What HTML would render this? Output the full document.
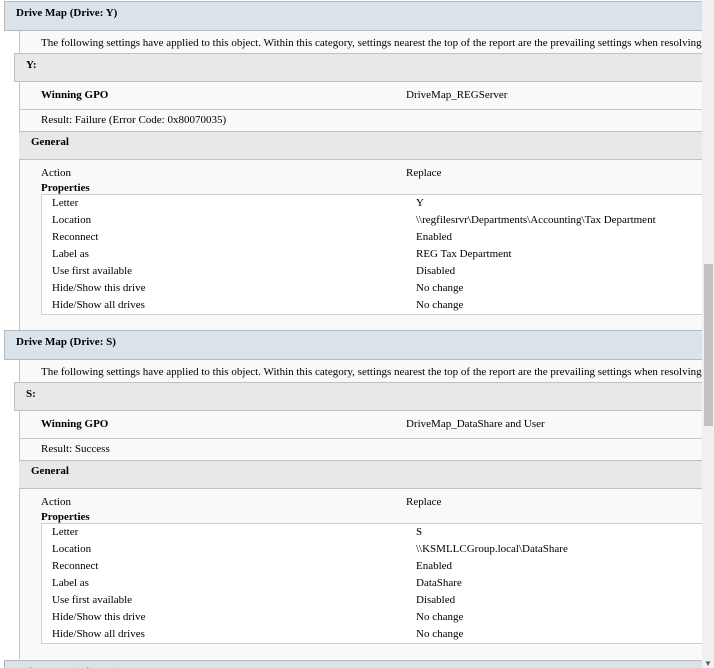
<!DOCTYPE html>
<html style="overflow:hidden;height:668px"><head><style>
*{margin:0;padding:0;box-sizing:border-box}
body{width:714px;height:668px;overflow:hidden;background:#fff;font-family:"Liberation Serif",serif;font-size:11px;color:#000;position:relative}
.a{position:absolute;white-space:nowrap;line-height:13px}
.b{font-weight:bold}
.sec{position:absolute;left:0;width:702px;height:330px}
.hd{position:absolute;left:4px;top:1px;width:700px;height:30px;background:#dae3ea;border:1px solid #b8b8b8}
.ct{position:absolute;left:19px;top:31px;width:685px;height:299px;background:#f9f9f9;border-left:1px solid #c4c4c4}
.sub{position:absolute;left:14px;top:53px;width:690px;height:29px;background:#e8e8e8;border:1px solid #c0c0c0}
.ln{position:absolute;left:19px;width:685px;height:1px;background:#c8c8c8}
.gen{position:absolute;left:19px;top:131px;width:685px;height:29px;background:#e8e8e8;border-top:1px solid #c0c0c0;border-bottom:1px solid #c0c0c0}
.tb{position:absolute;left:41px;top:194px;width:663px;height:121px;background:#fff;border:1px solid #cfcfcf}
.sb{position:absolute;left:702px;top:0;width:12px;height:668px;background:#f0f0f0}
.th{position:absolute;left:704px;top:264px;width:9px;height:162px;background:#c1c1c1}
</style></head><body>

<div class="sec" style="top:0">
<div class="hd"></div><div class="a b" style="left:16px;top:7px">Drive Map (Drive: Y)</div>
<div class="ct"></div>
<div class="a" style="left:41px;top:37px">The following settings have applied to this object. Within this category, settings nearest the top of the report are the prevailing settings when resolving conflicts.</div>
<div class="sub"></div><div class="a b" style="left:26px;top:59px">Y:</div>
<div class="a b" style="left:41px;top:89px">Winning GPO</div><div class="a" style="left:406px;top:89px">DriveMap_REGServer</div>
<div class="ln" style="top:109px"></div>
<div class="a" style="left:41px;top:114px">Result: Failure (Error Code: 0x80070035)</div>
<div class="gen"></div><div class="a b" style="left:31px;top:136px">General</div>
<div class="a" style="left:41px;top:167px">Action</div><div class="a" style="left:406px;top:167px">Replace</div>
<div class="a b" style="left:41px;top:182px">Properties</div>
<div class="tb"></div>
<div class="a" style="left:52px;top:197px">Letter</div><div class="a" style="left:416px;top:197px">Y</div>
<div class="a" style="left:52px;top:214px">Location</div><div class="a" style="left:416px;top:214px">\\regfilesrvr\Departments\Accounting\Tax Department</div>
<div class="a" style="left:52px;top:231px">Reconnect</div><div class="a" style="left:416px;top:231px">Enabled</div>
<div class="a" style="left:52px;top:248px">Label as</div><div class="a" style="left:416px;top:248px">REG Tax Department</div>
<div class="a" style="left:52px;top:265px">Use first available</div><div class="a" style="left:416px;top:265px">Disabled</div>
<div class="a" style="left:52px;top:282px">Hide/Show this drive</div><div class="a" style="left:416px;top:282px">No change</div>
<div class="a" style="left:52px;top:299px">Hide/Show all drives</div><div class="a" style="left:416px;top:299px">No change</div>
</div>

<div class="sec" style="top:329px">
<div class="hd"></div><div class="a b" style="left:16px;top:7px">Drive Map (Drive: S)</div>
<div class="ct"></div>
<div class="a" style="left:41px;top:37px">The following settings have applied to this object. Within this category, settings nearest the top of the report are the prevailing settings when resolving conflicts.</div>
<div class="sub"></div><div class="a b" style="left:26px;top:59px">S:</div>
<div class="a b" style="left:41px;top:89px">Winning GPO</div><div class="a" style="left:406px;top:89px">DriveMap_DataShare and User</div>
<div class="ln" style="top:109px"></div>
<div class="a" style="left:41px;top:114px">Result: Success</div>
<div class="gen"></div><div class="a b" style="left:31px;top:136px">General</div>
<div class="a" style="left:41px;top:167px">Action</div><div class="a" style="left:406px;top:167px">Replace</div>
<div class="a b" style="left:41px;top:182px">Properties</div>
<div class="tb"></div>
<div class="a" style="left:52px;top:197px">Letter</div><div class="a" style="left:416px;top:197px">S</div>
<div class="a" style="left:52px;top:214px">Location</div><div class="a" style="left:416px;top:214px">\\KSMLLCGroup.local\DataShare</div>
<div class="a" style="left:52px;top:231px">Reconnect</div><div class="a" style="left:416px;top:231px">Enabled</div>
<div class="a" style="left:52px;top:248px">Label as</div><div class="a" style="left:416px;top:248px">DataShare</div>
<div class="a" style="left:52px;top:265px">Use first available</div><div class="a" style="left:416px;top:265px">Disabled</div>
<div class="a" style="left:52px;top:282px">Hide/Show this drive</div><div class="a" style="left:416px;top:282px">No change</div>
<div class="a" style="left:52px;top:299px">Hide/Show all drives</div><div class="a" style="left:416px;top:299px">No change</div>
</div>

<div class="sec" style="top:659px;height:9px;overflow:hidden">
<div class="hd"></div><div class="a b" style="left:16px;top:7px">Drive Map (Drive: H)</div>
</div>

<div class="sb"></div><div class="th"></div>
<div class="a" style="left:704px;top:657px;font-size:8px;color:#606060">▼</div>
</body></html>
